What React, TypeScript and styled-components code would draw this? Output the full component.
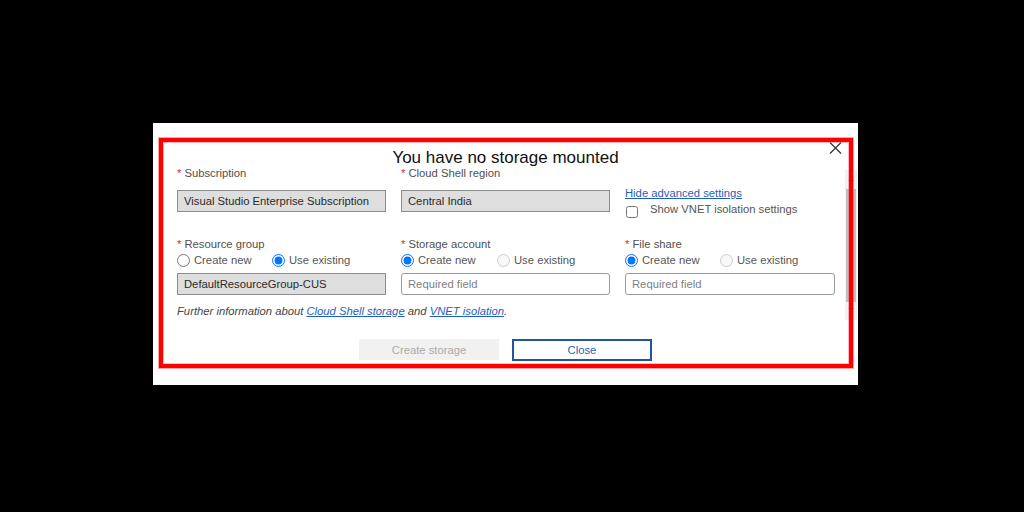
import React from "react";
import styled, { createGlobalStyle } from "styled-components";

const Global = createGlobalStyle`
  html, body { margin: 0; padding: 0; background: #000; }
  body { width: 1024px; height: 512px; overflow: hidden; font-family: "Liberation Sans", Arial, sans-serif; }
`;

const Dialog = styled.div`
  position: relative;
  width: 705px;
  height: 262px;
  margin: 123px 0 0 153px;
  background: #fff;
  display: flex;
  flex-direction: column;
`;

const Title = styled.h1`
  margin: 24px 0 0 0;
  height: 22px;
  font-size: 17px;
  line-height: 22px;
  font-weight: 400;
  text-align: center;
  color: #111;
`;

const CloseX = styled.button`
  position: absolute;
  top: 18px;
  right: 16px;
  width: 14px;
  height: 13px;
  padding: 0;
  border: 0;
  background: transparent;
  display: flex;
  align-items: center;
  justify-content: center;
`;

const Body = styled.div`
  display: flex;
  height: 152px;
`;

const Content = styled.div`
  flex: 1;
  overflow: hidden;
  padding-left: 24px;
`;

const Grid = styled.div`
  margin-top: -3px;
  display: grid;
  grid-template-columns: 209px 209px 210px;
  grid-template-rows: 46px auto;
  column-gap: 15px;
  row-gap: 25px;
`;

const Cell = styled.div<{ $pad?: number }>`
  display: flex;
  flex-direction: column;
  padding-top: ${(p) => p.$pad ?? 0}px;
`;

const Label = styled.div`
  font-size: 11.25px;
  line-height: 14px;
  height: 14px;
  color: #505050;
  white-space: nowrap;
`;

const Star = styled.span`
  color: #e0281c;
  margin-right: 3px;
`;

const ReadInput = styled.div<{ $gap: number }>`
  margin-top: ${(p) => p.$gap}px;
  box-sizing: border-box;
  height: 22px;
  border: 1px solid #8c8c8c;
  background: #dedede;
  padding: 0 6px;
  font-size: 11.25px;
  line-height: 20px;
  color: #2a2a2a;
  white-space: nowrap;
`;

const TextInput = styled.input`
  margin-top: 5px;
  box-sizing: border-box;
  width: 100%;
  height: 22px;
  border: 1px solid #9a9a9a;
  border-radius: 3px;
  background: #fff;
  padding: 0 6px;
  font-family: inherit;
  font-size: 11.25px;
  color: #2a2a2a;
  outline: none;
  &::placeholder { color: #808080; }
`;

const RadioRow = styled.div`
  margin-top: 1px;
  height: 16px;
  display: flex;
  align-items: center;
`;

const RadioOption = styled.label<{ $w: number }>`
  display: flex;
  align-items: center;
  width: ${(p) => p.$w}px;
  font-size: 11.25px;
  color: #555;
  white-space: nowrap;
  input {
    width: 13px;
    height: 13px;
    margin: 0 4px 0 0;
  }
`;

const Link = styled.a`
  font-size: 11.25px;
  line-height: 14px;
  color: #1f5fbf;
  text-decoration: underline;
  white-space: nowrap;
  align-self: flex-start;
`;

const CheckRow = styled.label`
  margin-top: 2px;
  display: flex;
  align-items: flex-start;
  font-size: 11.25px;
  line-height: 14px;
  color: #555;
  input {
    width: 12px;
    height: 12px;
    margin: 4px 12px 0 1px;
  }
`;

const Info = styled.p`
  margin: 9px 0 0 0;
  font-size: 11.25px;
  line-height: 14px;
  font-style: italic;
  color: #444;
  a { color: #1f5fbf; text-decoration: underline; }
`;

const Scrollbar = styled.div`
  width: 12px;
  height: 150px;
  margin: 1px 1px 0 0;
  background: #f1f1f1;
  display: flex;
  flex-direction: column;
  align-items: center;
`;

const Arrow = styled.div<{ $up?: boolean }>`
  margin-top: ${(p) => (p.$up ? 8 : 6)}px;
  width: 0;
  height: 0;
  border-left: 3px solid transparent;
  border-right: 3px solid transparent;
  ${(p) => (p.$up ? "border-bottom: 3px solid #a3a3a3;" : "border-top: 3px solid #a3a3a3;")}
`;

const Thumb = styled.div`
  margin-top: 8px;
  width: 10px;
  height: 113px;
  background: #c1c1c1;
`;

const Footer = styled.div`
  margin-top: 18px;
  display: flex;
  justify-content: center;
  gap: 13px;
`;

const Button = styled.button<{ $primary?: boolean }>`
  box-sizing: border-box;
  width: 140px;
  height: 22px;
  font-family: inherit;
  font-size: 11.25px;
  ${(p) =>
    p.$primary
      ? "border: 2px solid #1d57a3; background: #fff; color: #2463b4;"
      : "border: 0; background: #f1f1f1; color: #ababab; height: 21px;"}
`;

const RedFrame = styled.div`
  position: absolute;
  left: 6px;
  top: 15px;
  width: 694px;
  height: 230px;
  box-sizing: border-box;
  border: 4px solid #ff0000;
  box-shadow: 0 0 0 1px rgba(255, 60, 60, 0.45), inset 0 0 0 1px rgba(255, 60, 60, 0.35);
  pointer-events: none;
`;

export default function App() {
  return (
    <>
      <Global />
      <Dialog>
        <Title>You have no storage mounted</Title>
        <Body>
          <Content>
            <Grid>
              <Cell>
                <Label><Star>*</Star>Subscription</Label>
                <ReadInput $gap={10}>Visual Studio Enterprise Subscription</ReadInput>
              </Cell>
              <Cell>
                <Label><Star>*</Star>Cloud Shell region</Label>
                <ReadInput $gap={10}>Central India</ReadInput>
              </Cell>
              <Cell $pad={20}>
                <Link href="#">Hide advanced settings</Link>
                <CheckRow>
                  <input type="checkbox" />
                  Show VNET isolation settings
                </CheckRow>
              </Cell>

              <Cell>
                <Label><Star>*</Star>Resource group</Label>
                <RadioRow>
                  <RadioOption $w={95}><input type="radio" name="rg" />Create new</RadioOption>
                  <RadioOption $w={100}><input type="radio" name="rg" defaultChecked />Use existing</RadioOption>
                </RadioRow>
                <ReadInput $gap={5}>DefaultResourceGroup-CUS</ReadInput>
              </Cell>
              <Cell>
                <Label><Star>*</Star>Storage account</Label>
                <RadioRow>
                  <RadioOption $w={96}><input type="radio" name="sa" defaultChecked />Create new</RadioOption>
                  <RadioOption $w={100}><input type="radio" name="sa" disabled />Use existing</RadioOption>
                </RadioRow>
                <TextInput placeholder="Required field" />
              </Cell>
              <Cell>
                <Label><Star>*</Star>File share</Label>
                <RadioRow>
                  <RadioOption $w={95}><input type="radio" name="fs" defaultChecked />Create new</RadioOption>
                  <RadioOption $w={100}><input type="radio" name="fs" disabled />Use existing</RadioOption>
                </RadioRow>
                <TextInput placeholder="Required field" />
              </Cell>
            </Grid>
            <Info>
              Further information about <a href="#">Cloud Shell storage</a> and <a href="#">VNET isolation</a>.
            </Info>
          </Content>
          <Scrollbar>
            <Arrow $up />
            <Thumb />
            <Arrow />
          </Scrollbar>
        </Body>
        <Footer>
          <Button disabled>Create storage</Button>
          <Button $primary>Close</Button>
        </Footer>
        <CloseX aria-label="Close">
          <svg width="13" height="12" viewBox="0 0 13 12">
            <path d="M1 0.5 L12 11.5 M12 0.5 L1 11.5" stroke="#333" strokeWidth="1.2" fill="none" />
          </svg>
        </CloseX>
        <RedFrame />
      </Dialog>
    </>
  );
}
